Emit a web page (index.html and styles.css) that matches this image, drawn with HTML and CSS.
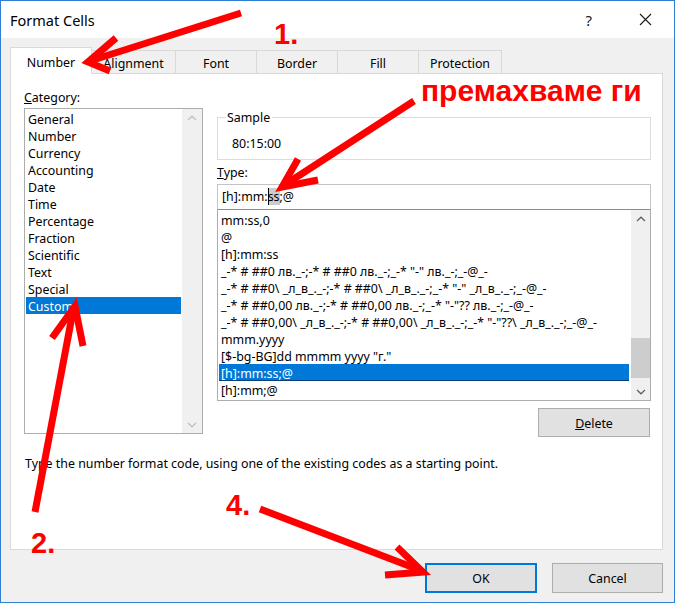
FILE: index.html
```html
<!DOCTYPE html>
<html>
<head>
<meta charset="utf-8">
<title>Format Cells</title>
<link rel="stylesheet" href="styles.css">
</head>
<body>
<div class="window">
  <div class="titlebar">
    <span class="title">Format Cells</span>
    <span class="help">?</span>
    <span class="close"><svg width="13" height="13" viewBox="0 0 13 13"><path d="M1 1L12 12M12 1L1 12" stroke="#1a1a1a" stroke-width="1.1" fill="none"/></svg></span>
  </div>
  <div class="body">
    <div class="tabs">
      <div class="tab active w-number">Number</div>
      <div class="tab w-align">Alignment</div>
      <div class="tab w-std">Font</div>
      <div class="tab w-std">Border</div>
      <div class="tab w-std">Fill</div>
      <div class="tab w-prot">Protection</div>
    </div>
    <div class="panel">
      <div class="cols">
        <div class="leftcol">
          <div class="label"><u>C</u>ategory:</div>
          <div class="listbox cat">
            <ul class="items">
              <li>General</li>
              <li>Number</li>
              <li>Currency</li>
              <li>Accounting</li>
              <li>Date</li>
              <li>Time</li>
              <li>Percentage</li>
              <li>Fraction</li>
              <li>Scientific</li>
              <li>Text</li>
              <li>Special</li>
              <li class="selected">Custom</li>
            </ul>
            <div class="vscroll disabled">
              <div class="arrow"><svg width="10" height="6" viewBox="0 0 10 6"><polyline points="1,5 5,1.2 9,5" fill="none" stroke="currentColor" stroke-width="1.2"/></svg></div>
              <div class="track"></div>
              <div class="arrow"><svg width="10" height="6" viewBox="0 0 10 6"><polyline points="1,1 5,4.8 9,1" fill="none" stroke="currentColor" stroke-width="1.2"/></svg></div>
            </div>
          </div>
        </div>
        <div class="rightcol">
          <fieldset class="sample">
            <legend>Sample</legend>
            <div class="sample-val">80:15:00</div>
          </fieldset>
          <div class="label type-label"><u>T</u>ype:</div>
          <div class="typeinput">[h]:mm:<span class="sel">ss</span>;@</div>
          <div class="listbox fmt">
            <ul class="items">
              <li>mm:ss,0</li>
              <li>@</li>
              <li>[h]:mm:ss</li>
              <li>_-* # ##0 лв._-;-* # ##0 лв._-;_-* "-" лв._-;_-@_-</li>
              <li>_-* # ##0\ _л_в_._-;-* # ##0\ _л_в_._-;_-* "-" _л_в_._-;_-@_-</li>
              <li>_-* # ##0,00 лв._-;-* # ##0,00 лв._-;_-* "-"?? лв._-;_-@_-</li>
              <li>_-* # ##0,00\ _л_в_._-;-* # ##0,00\ _л_в_._-;_-* "-"??\ _л_в_._-;_-@_-</li>
              <li>mmm.yyyy</li>
              <li>[$-bg-BG]dd mmmm yyyy "г."</li>
              <li class="selected">[h]:mm:ss;@</li>
              <li>[h]:mm;@</li>
            </ul>
            <div class="vscroll">
              <div class="arrow"><svg width="10" height="6" viewBox="0 0 10 6"><polyline points="1,5 5,1.2 9,5" fill="none" stroke="currentColor" stroke-width="1.2"/></svg></div>
              <div class="track"></div>
              <div class="thumb"></div>
              <div class="arrow"><svg width="10" height="6" viewBox="0 0 10 6"><polyline points="1,1 5,4.8 9,1" fill="none" stroke="currentColor" stroke-width="1.2"/></svg></div>
            </div>
          </div>
          <div class="delrow"><button class="btn del"><u>D</u>elete</button></div>
        </div>
      </div>
      <p class="desc">Type the number format code, using one of the existing codes as a starting point.</p>
    </div>
    <div class="footer">
      <button class="btn ok">OK</button>
      <button class="btn cancel">Cancel</button>
    </div>
  </div>
  <svg class="annot" width="675" height="603" viewBox="0 0 675 603">
    <g stroke="#ff0000" stroke-width="7" fill="none" stroke-linejoin="miter" stroke-linecap="butt">
      <line x1="241" y1="13" x2="93" y2="60"/>
      <polyline points="116,38 88,62 110,71"/>
      <line x1="414" y1="101" x2="286" y2="184"/>
      <polyline points="298,159 282,187 318,180"/>
      <line x1="35" y1="512" x2="73" y2="311"/>
      <polyline points="52,338 75,306 83,346"/>
      <line x1="260" y1="509" x2="417" y2="569"/>
      <polyline points="397,547 423,572 385,575"/>
    </g>
    <g fill="#ff0000" font-family="'Liberation Sans', Arial, sans-serif" font-weight="bold">
      <text x="274" y="44" font-size="29">1.</text>
      <text x="421" y="101" font-size="30">премахваме ги</text>
      <text x="31" y="553" font-size="29">2.</text>
      <text x="226" y="515" font-size="29">4.</text>
    </g>
  </svg>
</div>
</body>
</html>
```

FILE: styles.css
```css
* { box-sizing: border-box; }
html, body { margin: 0; padding: 0; }
body {
  width: 675px;
  height: 603px;
  overflow: hidden;
  font-family: "Noto Sans", "Open Sans", sans-serif;
  font-size: 12.4px;
  color: #000;
  background: #ffffff;
}
.window {
  position: relative;
  width: 675px;
  height: 603px;
  border: 1px solid #2f7fd6;
  background: #f0f0f0;
  display: flex;
  flex-direction: column;
}
.titlebar {
  height: 37px;
  background: #ffffff;
  display: flex;
  align-items: center;
  padding: 0 22px 0 9px;
  flex: none;
}
.title {
  font-size: 14.5px;
  color: #000;
}
.help {
  margin-left: auto;
  font-size: 15px;
  color: #1a1a1a;
  margin-right: 47px;
}
.close { display: flex; align-items: center; }
.body {
  flex: 1;
  padding: 9px 11px 0 9px;
  display: flex;
  flex-direction: column;
}
.tabs {
  display: flex;
  align-items: flex-end;
  height: 26px;
  flex: none;
}
.tab {
  height: 23px;
  border: 1px solid #d9d9d9;
  border-bottom: none;
  background: #f0f0f0;
  display: flex;
  align-items: center;
  justify-content: center;
  margin-left: -1px;
  color: #000;
  padding-top: 3px;
}
.tab.active {
  height: 27px;
  margin-left: 0;
  margin-bottom: -1px;
  background: #ffffff;
  position: relative;
  z-index: 1;
  padding-top: 2px;
  padding-bottom: 0;
}
.w-number { width: 82px; }
.w-align { width: 85px; }
.w-std { width: 82px; }
.w-prot { width: 84px; }
.panel {
  height: 477px;
  flex: none;
  background: #ffffff;
  border: 1px solid #d9d9d9;
  padding: 15px 11px 0 13px;
}
.cols {
  display: flex;
  gap: 14px;
  height: 349px;
}
.leftcol { width: 179px; display: flex; flex-direction: column; }
.rightcol { width: 434px; display: flex; flex-direction: column; }
.label { line-height: 16px; height: 16px; padding-top: 1px; }
.listbox {
  border: 1px solid #adadad;
  display: flex;
  background: #fff;
  overflow: hidden;
}
.listbox.cat {
  margin-top: 3px;
  height: 326px;
}
.items {
  list-style: none;
  margin: 0;
  padding: 1px 0 0 1px;
  flex: 1;
  min-width: 0;
  overflow: hidden;
}
.items li {
  height: 17px;
  line-height: 17px;
  padding-top: 1px;
  padding-left: 2px;
  white-space: nowrap;
  overflow: hidden;
}
.cat .items { padding-right: 1px; }
.fmt .items { padding-right: 2px; }
.items li.selected {
  background: #0078d7;
  color: #ffffff;
}
.fmt .items li.selected { box-shadow: inset 0 -1px 0 #003f7a; }
.vscroll {
  width: 20px;
  flex: none;
  background: #f0f0f0;
  display: flex;
  flex-direction: column;
  color: #606060;
}
.fmt .vscroll { width: 19px; }
.vscroll.disabled { color: #bfbfbf; }
.vscroll .arrow {
  height: 17px;
  display: flex;
  align-items: center;
  justify-content: center;
  flex: none;
}
.vscroll .track { flex: 1; }
.vscroll .thumb {
  height: 40px;
  background: #cdcdcd;
  margin-bottom: 5px;
  flex: none;
}
.sample {
  margin: 20px 0 0 0;
  padding: 0 0 8px 8px;
  border: 1px solid #dcdcdc;
  min-width: 0;
}
.sample legend {
  padding: 1px 2px 0 1px;
  line-height: 15px;
}
.sample-val {
  margin-top: 11px;
  line-height: 16px;
  height: 15px;
  padding-left: 6px;
}
.type-label { margin-top: 4px; }
.typeinput {
  margin-top: 4px;
  height: 26px;
  border: 1px solid #c4c4c4;
  border-bottom: 1px solid #8c8c8c;
  line-height: 24px;
  padding-left: 4px;
  white-space: nowrap;
}
.typeinput .sel {
  background: #cccccc;
  box-shadow: inset 1px 0 0 #000;
}
.listbox.fmt {
  height: 191px;
  border-top: none;
}
.delrow {
  display: flex;
  justify-content: flex-end;
  margin-top: 7px;
  padding-right: 1px;
}
.btn {
  font-family: inherit;
  font-size: 12.4px;
  color: #000;
  background: #e1e1e1;
  border: 1px solid #adadad;
  border-radius: 0;
  padding: 1px 0 0 0;
  margin: 0;
}
.del { width: 112px; height: 29px; }
.desc {
  margin: 17px 0 0 1px;
  line-height: 16px;
  padding-top: 1px;
}
.footer {
  display: flex;
  justify-content: flex-end;
  gap: 15px;
  padding-top: 13px;
}
.ok {
  width: 112px;
  height: 30px;
  border: 2px solid #0078d7;
}
.cancel {
  width: 111px;
  height: 30px;
}
.annot {
  position: absolute;
  top: -1px;
  left: -1px;
  pointer-events: none;
  z-index: 5;
}
```
